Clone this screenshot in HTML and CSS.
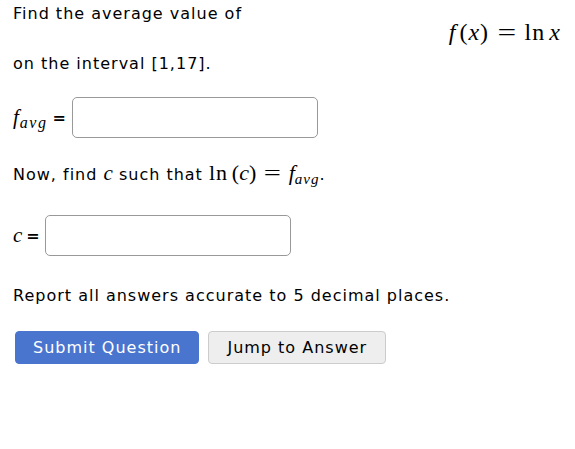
FILE: index.html
```html
<!DOCTYPE html>
<html lang="en">
<head>
    <meta charset="UTF-8">
    <title>Average value question</title>
    <link rel="stylesheet" href="styles.css">
</head>
<body>
    <div class="question">
        <p class="line first">Find the average value of</p>
        <div class="display"><span class="mi ff">f</span><span class="mo">(</span><span class="mi">x</span><span class="mo">)</span><span class="rel">=</span><span class="fn">ln</span><span class="mi">x</span></div>
        <p class="line interval">on the interval [1,17].</p>

        <div class="answer first-answer">
            <span class="label"><span class="mi">f</span><span class="mi sub">avg</span></span>
            <span class="eq">=</span>
            <input type="text" class="box">
        </div>

        <p class="line now">Now, find <span class="mi small">c</span> such that <span class="big"><span class="fn">ln</span><span class="mo">(</span><span class="mi">c</span><span class="mo">)</span><span class="rel">=</span><span class="mi">f</span><span class="mi sub">avg</span></span>.</p>

        <div class="answer second-answer">
            <span class="label"><span class="mi">c</span></span>
            <span class="eq">=</span>
            <input type="text" class="box">
        </div>

        <p class="line report">Report all answers accurate to 5 decimal places.</p>

        <div class="buttons">
            <button class="btn submit">Submit Question</button>
            <button class="btn jump">Jump to Answer</button>
        </div>
    </div>
</body>
</html>
```

FILE: styles.css
```css
body{
    margin: 0;
    font-family: "DejaVu Sans", sans-serif;
    font-size: 16px;
    letter-spacing: 1px;
    color: #000;
    background-color: #fff;
}
.question{
    padding: 0 13px;
}
.line{
    margin: 0;
    line-height: 24px;
}
.first{
    margin-top: 2px;
}
.display{
    display: flex;
    justify-content: flex-end;
    align-items: baseline;
    height: 24px;
    line-height: 24px;
    margin-top: -6px;
    padding-right: 2px;
    font-size: 24px;
    letter-spacing: 0;
}
.mi{
    font-family: "Liberation Serif", serif;
    font-style: italic;
    letter-spacing: 0;
}
.mo, .fn, .rel{
    font-family: "Liberation Serif", serif;
    letter-spacing: 0;
}
.display .ff{
    margin-right: 3px;
}
.display .mo{
    margin: 0 1px;
}
.rel{
    display: inline-block;
    transform: scaleX(1.38);
    margin: 0 11px;
}
.fn{
    margin-right: 0.17em;
    letter-spacing: 1px;
}
.interval{
    margin-top: 8px;
}
.answer{
    display: flex;
    align-items: center;
    gap: 5px;
    margin-top: 21px;
}
.label{
    font-size: 21px;
    line-height: 1;
}
.label .sub{
    font-size: 16px;
    letter-spacing: 1.5px;
    position: relative;
    top: 4px;
    margin-left: 1px;
}
.eq{
    font-weight: bold;
}
.box{
    width: 246px;
    height: 41px;
    box-sizing: border-box;
    border: 1px solid #999;
    border-radius: 5px;
    margin: 0;
}
.second-answer{
    margin-top: 28px;
    gap: 4px;
}
.now{
    margin-top: 25px;
}
.small{
    font-size: 21px;
    line-height: 0;
}
.big{
    font-size: 22px;
    line-height: 0;
}
.big .sub{
    font-size: 15px;
    letter-spacing: 1px;
    position: relative;
    top: 4px;
}
.big .rel{
    margin: 0 10px;
}
.report{
    margin-top: 28px;
}
.buttons{
    display: flex;
    gap: 9px;
    margin: 23px 0 0 2px;
}
.btn{
    height: 33px;
    padding: 0 17px;
    border-radius: 4px;
    font-family: "DejaVu Sans", sans-serif;
    font-size: 16px;
    letter-spacing: 1px;
}
.submit{
    background-color: #4a75cf;
    border: 1px solid #4a75cf;
    color: #fff;
}
.jump{
    padding: 0 18px;
    background-color: #eee;
    border: 1px solid #ccc;
    color: #000;
}
```
